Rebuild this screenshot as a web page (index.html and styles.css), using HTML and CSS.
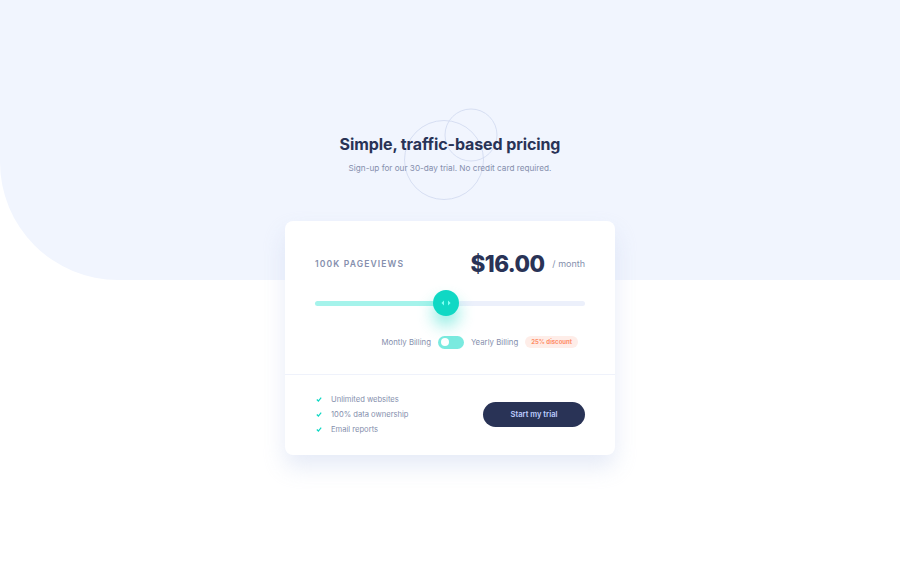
FILE: index.html
```html
<!DOCTYPE html>
<html lang="en">
<head>
<meta charset="utf-8">
<title>Pricing</title>
<link rel="stylesheet" href="styles.css">
</head>
<body>
<div class="hero">
  <header class="intro">
    <svg class="circles" width="110" height="100" viewBox="0 0 110 100" aria-hidden="true">
      <circle cx="40" cy="52" r="39.5" fill="none" stroke="#CFD8EF" stroke-width="0.8"/>
      <circle cx="67" cy="27" r="26" fill="none" stroke="#CFD8EF" stroke-width="0.8"/>
    </svg>
    <h1 class="title">Simple, traffic-based pricing</h1>
    <p class="subtitle">Sign-up for our 30-day trial. No credit card required.</p>
  </header>
</div>
<main class="card">
  <section class="card-top">
    <div class="row-head">
      <span class="views">100K Pageviews</span>
      <div class="price"><span class="amount">$16.00</span><span class="per">/ month</span></div>
    </div>
    <div class="slider">
      <div class="track-fill"></div>
      <div class="thumb">
        <svg width="10" height="6" viewBox="0 0 10 6" aria-hidden="true">
          <path d="M3 0.4 L0.4 3 L3 5.6 Z M7 0.4 L9.6 3 L7 5.6 Z" fill="#80FFF3"/>
        </svg>
      </div>
      <div class="track-rest"></div>
    </div>
    <div class="billing">
      <span class="bill-label">Montly Billing</span>
      <span class="toggle"><span class="knob"></span></span>
      <span class="bill-label">Yearly Billing</span>
      <span class="badge">25% discount</span>
    </div>
  </section>
  <section class="card-bottom">
    <ul class="features">
      <li><svg width="6" height="5" viewBox="0 0 9 8" aria-hidden="true"><path d="M1 4 L3.5 6.5 L8 1" fill="none" stroke="#10D8C4" stroke-width="2"/></svg>Unlimited websites</li>
      <li><svg width="6" height="5" viewBox="0 0 9 8" aria-hidden="true"><path d="M1 4 L3.5 6.5 L8 1" fill="none" stroke="#10D8C4" stroke-width="2"/></svg>100% data ownership</li>
      <li><svg width="6" height="5" viewBox="0 0 9 8" aria-hidden="true"><path d="M1 4 L3.5 6.5 L8 1" fill="none" stroke="#10D8C4" stroke-width="2"/></svg>Email reports</li>
    </ul>
    <button class="cta">Start my trial</button>
  </section>
</main>
</body>
</html>
```
FILE: styles.css
```css
* { box-sizing: border-box; }
html, body { margin: 0; padding: 0; }
body {
  background: #FFFFFF;
  font-family: Inter, "Noto Sans", sans-serif;
  color: #293356;
  width: 900px;
  height: 563px;
  overflow: hidden;
}
.hero {
  height: 280px;
  background: #F1F5FE;
  border-bottom-left-radius: 118px;
  padding-top: 134px;
}
.intro {
  position: relative;
  text-align: center;
}
.circles {
  position: absolute;
  left: 404px;
  top: -26px;
}
.title {
  position: relative;
  margin: 0;
  font-size: 16px;
  font-weight: 700;
  line-height: 21px;
  letter-spacing: -0.1px;
  color: #293356;
}
.subtitle {
  position: relative;
  margin: 7px 0 0;
  font-size: 8.2px;
  line-height: 12px;
  color: #858FAD;
}
.card {
  width: 330px;
  margin: -59px auto 0;
  background: #FFFFFF;
  border-radius: 8px;
  box-shadow: 0 12px 22px rgba(199, 210, 238, 0.45);
  position: relative;
}
.card-top {
  padding: 30px 30px 25px;
  border-bottom: 1px solid #EFF2FB;
}
.row-head {
  display: flex;
  justify-content: space-between;
  align-items: center;
  height: 26px;
}
.views {
  font-size: 8.6px;
  font-weight: 600;
  letter-spacing: 1.1px;
  text-transform: uppercase;
  color: #858FAD;
}
.price {
  display: flex;
  align-items: center;
  gap: 8px;
  margin-top: -2px;
}
.amount {
  font-size: 22.5px;
  font-weight: 800;
  letter-spacing: -0.6px;
  color: #293356;
}
.per {
  font-size: 9px;
  color: #858FAD;
  margin-top: 1px;
}
.slider {
  margin-top: 13px;
  height: 26px;
  display: flex;
  align-items: center;
}
.track-fill {
  width: 124px;
  height: 5px;
  background: #A5F3EB;
  border-radius: 3px 0 0 3px;
}
.track-rest {
  flex: 1;
  height: 5px;
  background: #ECF0FB;
  border-radius: 0 3px 3px 0;
}
.thumb {
  width: 26px;
  height: 26px;
  flex: none;
  border-radius: 50%;
  background: #10D8C4;
  box-shadow: 0 10px 16px rgba(16, 216, 196, 0.45);
  display: flex;
  align-items: center;
  justify-content: center;
  margin: 0 -6px 0 -6px;
  position: relative;
  z-index: 1;
}
.billing {
  margin-top: 19px;
  display: flex;
  align-items: center;
  justify-content: flex-end;
  padding-right: 7px;
  height: 14px;
}
.bill-label {
  font-size: 7.8px;
  color: #858FAD;
}
.toggle {
  width: 26px;
  height: 13px;
  border-radius: 7px;
  background: #7AEADF;
  margin: 0 7px;
  display: flex;
  align-items: center;
  padding-left: 3px;
}
.knob {
  width: 8px;
  height: 8px;
  border-radius: 50%;
  background: #FFFFFF;
}
.badge {
  margin-left: 7px;
  background: #FEEDE8;
  color: #FF8D68;
  font-size: 6px;
  font-weight: 700;
  padding: 2px 6px;
  border-radius: 7px;
  line-height: 8px;
}
.card-bottom {
  padding: 17px 30px 18px;
  display: flex;
  justify-content: space-between;
  align-items: center;
}
.features {
  list-style: none;
  margin: 0;
  padding: 0;
}
.features li {
  font-size: 7.6px;
  line-height: 15px;
  color: #858FAD;
  display: flex;
  align-items: center;
}
.features svg {
  margin: 0 9px 0 1px;
}
.cta {
  width: 102px;
  height: 25px;
  border: 0;
  border-radius: 13px;
  background: #293356;
  color: #BECDFF;
  font-family: Inter, "Noto Sans", sans-serif;
  font-size: 7.6px;
  font-weight: 600;
  cursor: pointer;
}
```
